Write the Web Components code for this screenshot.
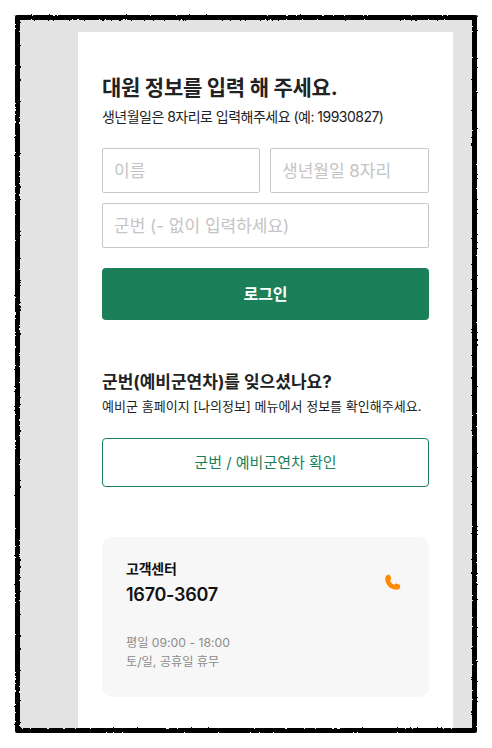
<!DOCTYPE html>
<html lang="ko"><head><meta charset="utf-8"><title>로그인</title>
<style>
html,body{margin:0;padding:0;background:#fff}
body{font-family:Inter,"Noto Sans CJK KR",sans-serif;color:#1a1a1a}
</style></head><body>
<app-frame>
  <login-page>
    <login-form></login-form>
    <forgot-box></forgot-box>
    <support-card></support-card>
  </login-page>
</app-frame>
<script>
function def(name,html){customElements.define(name,class extends HTMLElement{constructor(){super();this.attachShadow({mode:'open'}).innerHTML=html}})}
def('app-frame',`<style>
:host{display:block;box-sizing:border-box;width:462px;height:718px;margin:15px 0 0 15px;position:relative;padding:5px}
.edge{position:absolute;inset:0;border:5px solid #000;border-radius:2px;box-sizing:border-box;filter:url(#rough);pointer-events:none}
.in{background:#e3e3e3;height:100%;padding:12px 0 0 58px;box-sizing:border-box;overflow:hidden}
svg.f{position:absolute;width:0;height:0}
</style><svg class="f"><filter id="rough" x="-2%" y="-2%" width="104%" height="104%"><feTurbulence type="fractalNoise" baseFrequency="0.45" numOctaves="2" seed="4"/><feDisplacementMap in="SourceGraphic" scale="2.4" xChannelSelector="R" yChannelSelector="G"/></filter></svg><div class="in"><slot></slot></div><div class="edge"></div>`);
def('login-page',`<style>
:host{display:block;width:375px;height:696px;background:#fff;box-sizing:border-box;padding:41px 24px 0}
</style><slot></slot>`);
def('text-field',`<style>
:host{display:flex;align-items:center;box-sizing:border-box;height:45px;border:1px solid #c8c8c8;border-radius:2px;padding:0 11px 2px;font-size:17px;color:#c4c4c4;background:#fff;white-space:nowrap;min-width:0}
</style><slot></slot>`);
def('login-form',`<style>
:host{display:block}
h1{margin:0;font-size:21px;line-height:30px;font-weight:700;color:#222;letter-spacing:-.25px}
p{margin:3px 0 0;font-size:14px;line-height:21px;color:#222;letter-spacing:-.52px}
.row{display:grid;grid-template-columns:158px 159px;gap:10px;margin-top:21px}
text-field.full{margin-top:10px}
button{display:block;width:100%;height:52px;margin-top:20px;padding:0 0 2px;border:0;border-radius:4px;background:#1b7f5a;color:#fff;font:700 16px Inter,"Noto Sans CJK KR",sans-serif}
</style>
<h1>대원 정보를 입력 해 주세요.</h1>
<p>생년월일은 8자리로 입력해주세요 (예: 19930827)</p>
<div class="row"><text-field>이름</text-field><text-field>생년월일 8자리</text-field></div>
<text-field class="full">군번 (- 없이 입력하세요)</text-field>
<button>로그인</button>`);
def('forgot-box',`<style>
:host{display:block;margin-top:49px}
h2{margin:0;font-size:17px;line-height:26px;font-weight:700;color:#222}
p{margin:0;font-size:13px;line-height:22px;color:#222;letter-spacing:.03px}
button{display:block;width:100%;height:49px;margin-top:21px;padding:0 0 2px;background:#fff;border:1px solid #1b7f5a;border-radius:4px;color:#1b7f5a;font:400 15px Inter,"Noto Sans CJK KR",sans-serif}
</style>
<h2>군번(예비군연차)를 잊으셨나요?</h2>
<p>예비군 홈페이지 [나의정보] 메뉴에서 정보를 확인해주세요.</p>
<button>군번 / 예비군연차 확인</button>`);
def('support-card',`<style>
:host{display:block;box-sizing:border-box;height:160px;margin-top:50px;background:#f7f7f7;border-radius:10px;padding:22px 24px 0}
.top{display:flex;justify-content:space-between;align-items:center}
.t{font-size:14px;line-height:20px;font-weight:600;color:#111;letter-spacing:-.2px}
.n{font-size:18px;line-height:28px;font-weight:600;color:#111;margin-top:2px;letter-spacing:-.25px}
svg{display:block;margin:0 3px 3px 0}
.h{margin-top:24px;font-size:12.2px;line-height:19px;color:#8c8c8c}
</style>
<div class="top"><div><div class="t">고객센터</div><div class="n">1670-3607</div></div>
<svg width="18" height="18" viewBox="0 0 18 18"><path d="M3.600 1C4.800.5 5.900 1 6.300 2l.7 1.900c.3.8.1 1.500-.4 2l-.7.7c.8 1.900 2.300 3.400 4.200 4.300l.8-.8c.5-.5 1.300-.7 2-.4l2.200.9c1 .4 1.500 1.500 1 2.600l-.3.8c-.5 1.100-1.600 1.800-2.800 1.600C6.300 15.700 2 11.200 1.200 5.500 1 4.100 1.500 2.900 2.500 1.500z" fill="#ff8a00"/></svg></div>
<div class="h">평일 09:00 - 18:00<br>토/일, 공휴일 휴무</div>`);
</script></body></html>
